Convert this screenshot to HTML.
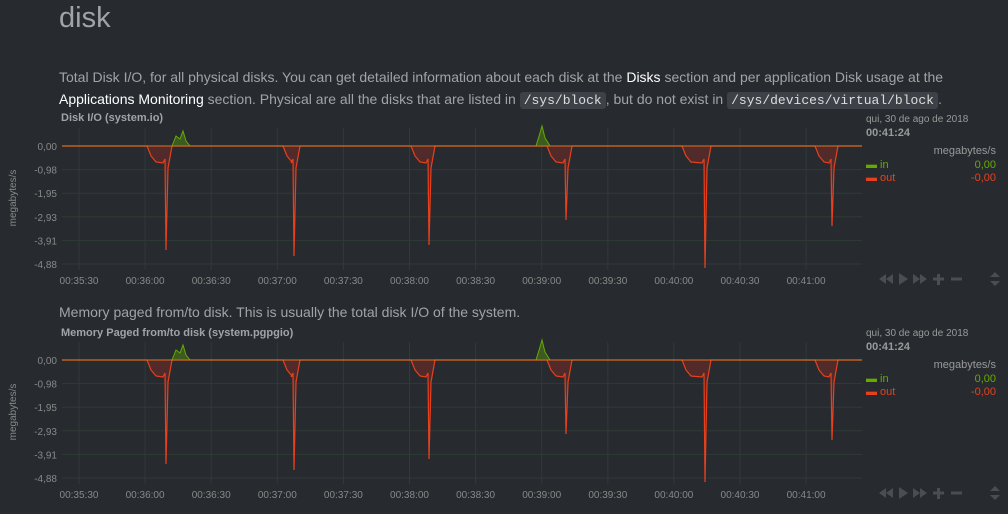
<!DOCTYPE html>
<html><head><meta charset="utf-8">
<style>
body{margin:0;background:#272b30;font-family:"Liberation Sans",sans-serif;color:#c8c8c8;width:1008px;height:503px;overflow:hidden;position:relative}
h1{position:absolute;left:59px;top:2px;margin:0;font-size:29px;font-weight:normal;color:#a0a4a8}
.p{position:absolute;left:59px;font-size:14px;color:#a0a4a8;line-height:22px;width:900px}
.p b{color:#fff;font-weight:normal}
code{font-family:"Liberation Mono",monospace;font-size:13px;background:#3e4248;color:#ddd;padding:1px 4px;border-radius:3px}
.t{position:absolute;left:61px;font-size:11px;font-weight:bold;color:#a0a4a8}
.leg{position:absolute;left:866px;width:130px;font-size:11px;color:#999}
svg{position:absolute;left:0}
</style></head><body>
<h1>disk</h1>
<div class="p" style="top:66px">Total Disk I/O, for all physical disks. You can get detailed information about each disk at the <b>Disks</b> section and per application Disk usage at the <b>Applications Monitoring</b> section. Physical are all the disks that are listed in <code>/sys/block</code>, but do not exist in <code>/sys/devices/virtual/block</code>.</div>
<div class="t" style="top:112px">Disk I/O (system.io)</div>
<div class="p" style="top:301px">Memory paged from/to disk. This is usually the total disk I/O of the system.</div>
<div class="t" style="top:327px">Memory Paged from/to disk (system.pgpgio)</div>
<div id="c"></div>
<script>
var ev=[[147,166,250],[283,294,256],[411,429,245],[547,566,220],[682,705,268],[815,832,226]];
function chart(oy){
 var z=146, s='<svg width="1008" height="300" style="top:'+oy+'px" viewBox="0 0 1008 300" font-family="Liberation Sans" font-size="10">';
 var labs=['0,00','-0,98','-1,95','-2,93','-3,91','-4,88'];
 for(var i=0;i<6;i++){var y=z+i*23.6;s+='<line x1="62" x2="862" y1="'+y+'" y2="'+y+'" stroke="#303a36"/>';s+='<text x="57" y="'+(y+4)+'" text-anchor="end" fill="#888">'+labs[i]+'</text>';}
 var xl=['00:35:30','00:36:00','00:36:30','00:37:00','00:37:30','00:38:00','00:38:30','00:39:00','00:39:30','00:40:00','00:40:30','00:41:00'];
 for(i=0;i<12;i++){var x=79+i*66.1;s+='<line x1="'+x+'" x2="'+x+'" y1="128" y2="270" stroke="#303a36"/>';s+='<text x="'+x+'" y="284" text-anchor="middle" fill="#888">'+xl[i]+'</text>';}
 s+='<text transform="translate(16,198) rotate(-90)" text-anchor="middle" fill="#888">megabytes/s</text>';
 var d='M62 '+z;
 ev.forEach(function(e){var a=e[0],b=e[1];d+=' L'+a+' '+z+' L'+(a+4)+' '+(z+10)+' L'+(a+9)+' '+(z+16)+' L'+(b-3)+' '+(z+17)+' L'+(b-1)+' '+(z+13)+' L'+b+' '+e[2]+' L'+(b+2)+' '+(z+22)+' L'+(b+6)+' '+z;});
 d+=' L862 '+z;
 s+='<path d="'+d+' Z" fill="#5a2a28" opacity="0.85"/><path d="'+d+'" fill="none" stroke="#e8401c" stroke-width="1.2"/>';
 s+='<path d="M172 146 L176 136 L180 139 L183 131 L186 141 L190 146 Z M536 146 L540 133 L542 126 L545 138 L550 146 Z" fill="#3d5a1f" stroke="#66aa00"/>';
 s+='<line x1="62" x2="862" y1="146" y2="146" stroke="#e07020" stroke-width="1"/>';
 s+='<g fill="#4a4e54" transform="translate(0,32)"><path d="M879 247l7-5v10zM886 247l7-5v10z"/><path d="M899 241l9 6-9 6z"/><path d="M913 242l7 5-7 5zM920 242l7 5-7 5z"/><rect x="933" y="245.5" width="11" height="3"/><rect x="937" y="242" width="3" height="11"/><rect x="951" y="245.5" width="11" height="3"/><path d="M990 245l5-5 5 5zM990 249l5 5 5-5z"/></g>';
 s+='</svg>';return s;}
var h=chart(0)+chart(214);
document.getElementById('c').innerHTML=h;
function leg(t){return '<div class="leg" style="top:'+t+'px"><div style="font-size:10px">qui, 30 de ago de 2018</div><div style="font-weight:bold;margin-top:2px">00:41:24</div><div style="text-align:right;margin-top:6px">megabytes/s</div><div style="margin-top:2px;color:#66aa00">▬ in<span style="float:right">0,00</span></div><div style="margin-top:1px;color:#e8401c">▬ out<span style="float:right">-0,00</span></div></div>';}
document.getElementById('c').innerHTML+=leg(114)+leg(328);
</script>
</body></html>
